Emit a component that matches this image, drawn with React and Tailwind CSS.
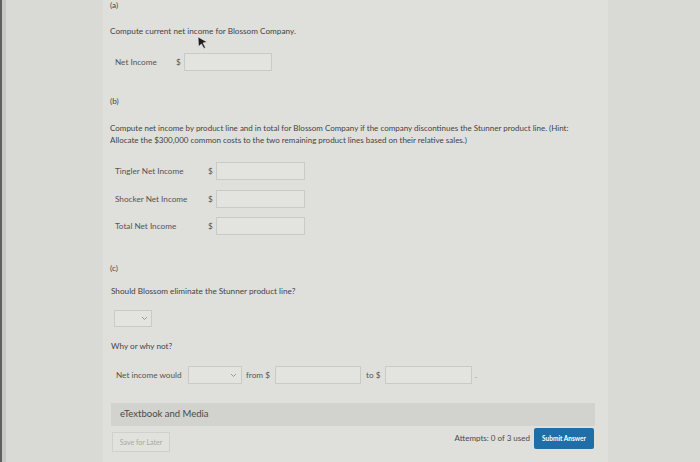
import React from "react";

const font = { fontFamily: "Lato, 'Open Sans', sans-serif" };

const Field = ({ w }) => (
  <span className={`inline-block h-[18px] border border-[#cacac6] bg-[#e3e3e0] ${w}`}></span>
);

const Chevron = () => (
  <svg width="7" height="5" viewBox="0 0 7 5" className="text-[#8a9bb0]">
    <path d="M1 1l2.5 2.5L6 1" fill="none" stroke="currentColor" strokeWidth="1" />
  </svg>
);

const Cursor = () => (
  <svg
    className="absolute left-[197px] top-[36px]"
    width="12"
    height="14"
    viewBox="0 0 12 14"
  >
    <path
      d="M1 1l9 5-4 1 2.5 4.5-1.6.9L4.4 8 1.6 10.6z"
      fill="#1c1c1c"
      stroke="#e8e8e8"
      strokeWidth="0.6"
    />
  </svg>
);

export default function App() {
  return (
    <div
      className="relative flex w-[700px] h-[462px] overflow-hidden bg-[#d9d9d5] text-[#444]"
      style={font}
    >
      <div className="w-[2px] h-full bg-[#5f5f5f]"></div>
      <div className="w-[4px] h-full bg-[#c8c8c4]"></div>
      <div className="ml-[97px] w-[505px] h-full bg-[#dfdfdc] pl-[7px]">
        <div className="h-[10px] leading-[10px] text-[8.2px]">(a)</div>
        <div className="mt-[16px] h-[10px] leading-[10px] text-[8.2px]">
          Compute current net income for Blossom Company.
        </div>
        <div className="mt-[17px] ml-[5px] flex items-center h-[18px] text-[8.2px] text-[#555]">
          <span className="w-[61px]">Net Income</span>
          <span className="w-[8px]">$</span>
          <Field w="w-[88px]" />
        </div>

        <div className="mt-[25px] h-[10px] leading-[10px] text-[8.2px]">(b)</div>
        <p className="mt-[16px] leading-[12px] text-[8px]">
          Compute net income by product line and in total for Blossom Company if the company discontinues the Stunner product line. (Hint:
          <br />
          Allocate the $300,000 common costs to the two remaining product lines based on their relative sales.)
        </p>

        <div className="mt-[16px] ml-[5px] flex items-center h-[18px] text-[8.2px] text-[#555]">
          <span className="w-[93px]">Tingler Net Income</span>
          <span className="w-[8px]">$</span>
          <Field w="w-[89px]" />
        </div>
        <div className="mt-[10px] ml-[5px] flex items-center h-[18px] text-[8.2px] text-[#555]">
          <span className="w-[93px]">Shocker Net Income</span>
          <span className="w-[8px]">$</span>
          <Field w="w-[89px]" />
        </div>
        <div className="mt-[9px] ml-[5px] flex items-center h-[18px] text-[8.2px] text-[#555]">
          <span className="w-[93px]">Total Net Income</span>
          <span className="w-[8px]">$</span>
          <Field w="w-[89px]" />
        </div>

        <div className="mt-[28px] h-[10px] leading-[10px] text-[8.2px]">(c)</div>
        <div className="mt-[13px] ml-[1px] h-[10px] leading-[10px] text-[8.2px]">
          Should Blossom eliminate the Stunner product line?
        </div>
        <div className="mt-[14px] ml-[4px] flex items-center justify-end pr-[3px] w-[38px] h-[17px] border border-[#cacac6] bg-[#e3e3e0]">
          <Chevron />
        </div>
        <div className="mt-[14px] ml-[1px] h-[10px] leading-[10px] text-[8.2px]">Why or why not?</div>

        <div className="mt-[15px] ml-[6px] flex items-center h-[18px] text-[8.2px] text-[#555]">
          <span className="w-[72px]">Net income would</span>
          <span className="flex items-center justify-end pr-[4px] w-[54px] h-[18px] border border-[#cacac6] bg-[#e3e3e0]">
            <Chevron />
          </span>
          <span className="ml-[4px] w-[29px]">from $</span>
          <Field w="w-[86px]" />
          <span className="ml-[5px] w-[19px]">to $</span>
          <Field w="w-[87px]" />
          <span className="ml-[3px] text-[#888]">.</span>
        </div>

        <div className="mt-[19px] ml-[1px] flex items-center w-[484px] h-[23px] bg-[#d2d2ce] pl-[9px] text-[9.5px] text-[#4a4a4a]">
          eTextbook and Media
        </div>

        <div className="mt-[2px] ml-[2px] flex items-start w-[482px] h-[24px]">
          <span className="mt-[4px] flex items-center justify-center w-[58px] h-[20px] border border-[#d0d0cc] bg-[#e1e1de] text-[7px] text-[#a8a8a8]">
            Save for Later
          </span>
          <span className="ml-auto mt-[4px] text-[8px] text-[#4a4a4a] leading-[12px]">
            Attempts: 0 of 3 used
          </span>
          <span className="ml-[4px] flex items-center justify-center w-[60px] h-[21px] rounded-[2px] bg-[#1f6ea8] text-[6.5px] font-bold text-white">
            Submit Answer
          </span>
        </div>
      </div>
      <Cursor />
    </div>
  );
}
